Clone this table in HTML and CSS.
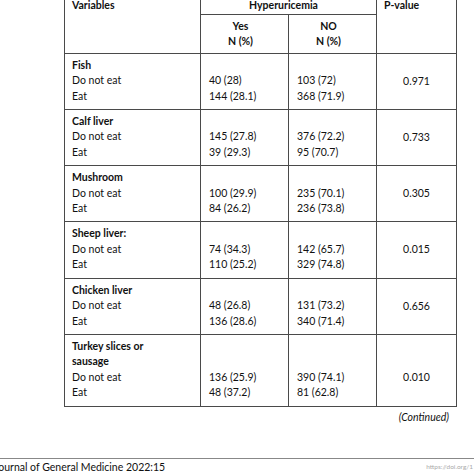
FILE: index.html
```html
<!DOCTYPE html>
<html>
<head>
<meta charset="utf-8">
<link rel="stylesheet" href="styles.css">
</head>
<body>
<div class="page">
  <table class="tbl">
    <colgroup>
      <col class="c1"><col class="c2"><col class="c3"><col class="c4">
    </colgroup>
    <thead>
      <tr>
        <th rowspan="2" class="left">Variables</th>
        <th colspan="2" class="hyper">Hyperuricemia</th>
        <th rowspan="2" class="left pv">P-value</th>
      </tr>
      <tr>
        <th class="sub"><div>Yes</div><div>N (%)</div></th>
        <th class="sub"><div>NO</div><div>N (%)</div></th>
      </tr>
    </thead>
    <tbody>
      <tr>
        <td class="var"><div class="lbl">Fish</div><div>Do not eat</div><div>Eat</div></td>
        <td class="num"><div>40 (28)</div><div>144 (28.1)</div></td>
        <td class="num"><div>103 (72)</div><div>368 (71.9)</div></td>
        <td class="p">0.971</td>
      </tr>
      <tr>
        <td class="var"><div class="lbl">Calf liver</div><div>Do not eat</div><div>Eat</div></td>
        <td class="num"><div>145 (27.8)</div><div>39 (29.3)</div></td>
        <td class="num"><div>376 (72.2)</div><div>95 (70.7)</div></td>
        <td class="p">0.733</td>
      </tr>
      <tr>
        <td class="var"><div class="lbl">Mushroom</div><div>Do not eat</div><div>Eat</div></td>
        <td class="num"><div>100 (29.9)</div><div>84 (26.2)</div></td>
        <td class="num"><div>235 (70.1)</div><div>236 (73.8)</div></td>
        <td class="p">0.305</td>
      </tr>
      <tr>
        <td class="var"><div class="lbl">Sheep liver:</div><div>Do not eat</div><div>Eat</div></td>
        <td class="num"><div>74 (34.3)</div><div>110 (25.2)</div></td>
        <td class="num"><div>142 (65.7)</div><div>329 (74.8)</div></td>
        <td class="p">0.015</td>
      </tr>
      <tr>
        <td class="var"><div class="lbl">Chicken liver</div><div>Do not eat</div><div>Eat</div></td>
        <td class="num"><div>48 (26.8)</div><div>136 (28.6)</div></td>
        <td class="num"><div>131 (73.2)</div><div>340 (71.4)</div></td>
        <td class="p">0.656</td>
      </tr>
      <tr>
        <td class="var"><div class="lbl">Turkey slices or</div><div class="lbl">sausage</div><div>Do not eat</div><div>Eat</div></td>
        <td class="num"><div>136 (25.9)</div><div>48 (37.2)</div></td>
        <td class="num"><div>390 (74.1)</div><div>81 (62.8)</div></td>
        <td class="p">0.010</td>
      </tr>
    </tbody>
  </table>
  <div class="cont">(Continued)</div>
  <footer class="foot">
    <span class="journal">Journal of General Medicine 2022:15</span>
    <span class="doi">https://doi.org/1</span>
  </footer>
</div>
</body>
</html>
```

FILE: styles.css
```css
html, body {
  margin: 0;
  padding: 0;
  background: #fff;
}
body {
  width: 474px;
  height: 474px;
  overflow: hidden;
  font-family: Lato, "Open Sans", sans-serif;
  font-size: 10.5px;
  color: #111;
}
.page {
  display: flex;
  flex-direction: column;
  height: 474px;
}
.tbl {
  border-collapse: collapse;
  margin: -1px 0 0 64px;
  width: 392px;
  table-layout: fixed;
  line-height: 15.4px;
}
.c1 { width: 136px; }
.c2 { width: 88px; }
.c3 { width: 88px; }
.c4 { width: 80px; }
.tbl th, .tbl td {
  border: 1px solid #4a4a4a;
  padding: 0;
}
.tbl th {
  font-weight: bold;
  vertical-align: top;
}
.tbl th.left {
  text-align: left;
  line-height: 11px;
  padding: 0 7px;
}
.tbl th.hyper {
  text-align: center;
  line-height: 11px;
  padding: 0 10px 3px 0;
}
.tbl th.sub {
  text-align: center;
  padding: 4px 8px 3px 0;
}
.tbl td {
  padding: 4px 7px 5px;
  vertical-align: bottom;
}
.tbl td.var {
  vertical-align: top;
}
.lbl {
  font-weight: bold;
}
.tbl td.num {
  padding-left: 8px;
}
.tbl td.p {
  text-align: center;
  padding-bottom: 20px;
}
.cont {
  font-style: italic;
  text-align: right;
  width: 449px;
  margin-top: 4px;
  line-height: 13px;
}
.foot {
  margin-top: auto;
  height: 15px;
  border-top: 1px solid #888;
  display: flex;
  justify-content: space-between;
  align-items: center;
}
.journal {
  margin-left: -6px;
  white-space: nowrap;
}
.doi {
  white-space: nowrap;
  font-size: 6.5px;
  color: #aaa;
  margin-right: 1px;
}
```
